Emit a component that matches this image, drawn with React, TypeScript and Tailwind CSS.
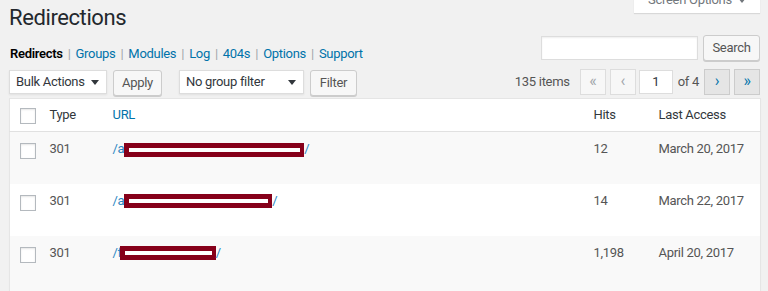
import React from "react";

// ==================== TYPES ====================
interface RedirectRow {
  id: number;
  type: number;
  prefix: string;
  maskWidth: number;
  maskOffset: number;
  hits: string;
  lastAccess: string;
}

// ==================== CONSTANTS ====================
const NAV_ITEMS = ["Redirects", "Groups", "Modules", "Log", "404s", "Options", "Support"];

const ROWS: RedirectRow[] = [
  { id: 1, type: 301, prefix: "/a", maskWidth: 180, maskOffset: 0, hits: "12", lastAccess: "March 20, 2017" },
  { id: 2, type: 301, prefix: "/a", maskWidth: 148, maskOffset: 0, hits: "14", lastAccess: "March 22, 2017" },
  { id: 3, type: 301, prefix: "/f", maskWidth: 96, maskOffset: -2, hits: "1,198", lastAccess: "April 20, 2017" },
];

const FONT = "font-['Roboto','Liberation_Sans',sans-serif]";

// ==================== MAIN COMPONENT ====================
export default function App() {
  return (
    <div className={`${FONT} h-[291px] w-[768px] overflow-hidden bg-[#f1f1f1] pl-[9px] pr-[8px] text-[13px] tracking-[-0.3px] text-[#555]`}>
      {/* Heading + Screen Options */}
      <div className="flex items-start justify-between">
        <h1 className="mt-[3px] text-[22px] leading-[29px] font-normal tracking-[-0.4px] text-[#23282d]">Redirections</h1>
        <div className="-mt-[13px] flex h-[26px] w-[126px] items-center justify-center gap-[6px] bg-white text-[#72777c] shadow-[0_1px_1px_rgba(0,0,0,0.1)]">
          <span>Screen Options</span>
          <Caret />
        </div>
      </div>

      {/* Sub navigation + search */}
      <div className="mt-[3px] flex h-[26px] items-start justify-between">
        <ul className="flex pt-[9px] pl-[1px] leading-[19.5px]">
          {NAV_ITEMS.map((item, i) => (
            <li key={item} className="flex">
              {i > 0 && <span className="px-[5px] text-[#a0a5aa]">|</span>}
              <span className={i === 0 ? "font-semibold text-[#000]" : "text-[#0073aa]"}>{item}</span>
            </li>
          ))}
        </ul>
        <div className="flex items-start gap-[5px]">
          <div className="mt-[1px] h-[24px] w-[157px] border border-[#ddd] bg-white shadow-[inset_0_1px_2px_rgba(0,0,0,0.07)]" />
          <Button className="w-[57px]">Search</Button>
        </div>
      </div>

      {/* Actions + pagination */}
      <div className="mt-[8px] flex h-[27px] items-start justify-between">
        <div className="flex items-start">
          <FakeSelect label="Bulk Actions" width="w-[98px]" />
          <Button className="ml-[6px] mt-[1px] w-[49px]">Apply</Button>
          <FakeSelect label="No group filter" width="ml-[17px] w-[125px]" />
          <Button className="ml-[6px] mt-[1px] w-[47px]">Filter</Button>
        </div>
        <div className="flex items-start">
          <span className="mr-[10px] leading-[26px]">135 items</span>
          <PageButton glyph="«" disabled />
          <PageButton glyph="‹" disabled className="ml-[4px]" />
          <div className="ml-[3px] mt-[1px] flex h-[24px] w-[34px] items-center justify-center border border-[#ddd] bg-white text-[#32373c]">
            1
          </div>
          <span className="ml-[5px] leading-[26px]">of 4</span>
          <PageButton glyph="›" className="ml-[5px]" />
          <PageButton glyph="»" className="ml-[4px]" />
        </div>
      </div>

      {/* Table */}
      <table className="mt-[2px] w-[751px] table-fixed border-collapse border border-[#e5e5e5] bg-white shadow-[0_1px_1px_rgba(0,0,0,0.04)]">
        <colgroup>
          <col className="w-[30px]" />
          <col className="w-[63px]" />
          <col className="w-[481px]" />
          <col className="w-[65px]" />
          <col className="w-[112px]" />
        </colgroup>
        <thead>
          <tr className="h-[33px] border-b border-[#e1e1e1] text-left text-[#32373c]">
            <th className="pl-[10px] pt-[1px] align-middle"><Checkbox /></th>
            <th className="pl-[10px] font-normal">Type</th>
            <th className="pl-[10px] font-normal text-[#0073aa]">URL</th>
            <th className="pl-[10px] font-normal">Hits</th>
            <th className="pl-[10px] font-normal">Last Access</th>
          </tr>
        </thead>
        <tbody>
          {ROWS.map((row, i) => (
            <tr
              key={row.id}
              className={`align-top ${i === ROWS.length - 1 ? "h-[64px]" : "h-[52px]"} ${i % 2 === 0 ? "bg-[#f9f9f9]" : "bg-white"}`}
            >
              <td className="pl-[10px] pt-[11px]"><Checkbox /></td>
              <td className="pl-[10px] pt-[7px] leading-[19.5px]">{row.type}</td>
              <td className="pl-[10px] pt-[7px] leading-[19.5px] text-[#2a86c2]">
                {row.prefix}
                <span
                  className="inline-block h-[14px] border-[5px] border-r-[4px] border-[#86001a] bg-white align-middle"
                  style={{ width: row.maskWidth, marginLeft: row.maskOffset }}
                />
                /
              </td>
              <td className="pl-[10px] pt-[7px] leading-[19.5px]">{row.hits}</td>
              <td className="pl-[10px] pt-[7px] leading-[19.5px]">{row.lastAccess}</td>
            </tr>
          ))}
        </tbody>
      </table>
    </div>
  );
}

// ==================== SMALL PIECES ====================
function Caret() {
  return (
    <svg width="8" height="5" viewBox="0 0 8 5" className="fill-current">
      <path d="M0 0h8L4 5z" />
    </svg>
  );
}

function Button({ children, className = "" }: { children: React.ReactNode; className?: string }) {
  return (
    <div
      className={`flex h-[26px] items-center justify-center rounded-[3px] border border-[#ccc] bg-[#f7f7f7] text-[#555] shadow-[0_1px_0_#ccc] ${className}`}
    >
      {children}
    </div>
  );
}

function FakeSelect({ label, width }: { label: string; width: string }) {
  return (
    <div
      className={`mt-[1px] flex h-[24px] items-center justify-between border border-[#ddd] bg-white pl-[6px] pr-[7px] text-[#32373c] shadow-[0_1px_2px_rgba(0,0,0,0.07)] ${width}`}
    >
      <span>{label}</span>
      <span className="text-[#32373c]"><Caret /></span>
    </div>
  );
}

function PageButton({ glyph, disabled = false, className = "" }: { glyph: string; disabled?: boolean; className?: string }) {
  return (
    <div
      className={`flex h-[26px] w-[26px] items-center justify-center border pb-[2px] text-[16px] ${
        disabled
          ? "border-[#ddd] bg-[#f7f7f7] text-[#a0a5aa]"
          : "border-[#ccc] bg-[#e5e5e5] text-[#0073aa]"
      } ${className}`}
    >
      {glyph}
    </div>
  );
}

function Checkbox() {
  return <div className="h-[16px] w-[16px] border border-[#b4b9be] bg-white shadow-[inset_0_1px_2px_rgba(0,0,0,0.1)]" />;
}
